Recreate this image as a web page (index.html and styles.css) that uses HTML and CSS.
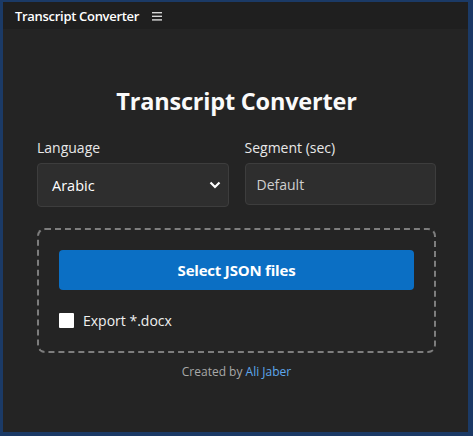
FILE: index.html
```html
<!DOCTYPE html>
<html lang="en">

<head>
    <meta charset="UTF-8">
    <title>Transcript Converter</title>
    <link rel="stylesheet" href="styles.css">
</head>

<body>
    <div class="panel">
        <div class="tabBar">
            <span class="tabTitle">Transcript Converter</span>
            <span class="tabMenu">
                <svg width="10" height="9" viewBox="0 0 10 9">
                    <rect x="0" y="0" width="10" height="1.4" fill="#d8d8d8"></rect>
                    <rect x="0" y="3.6" width="10" height="1.4" fill="#d8d8d8"></rect>
                    <rect x="0" y="7.2" width="10" height="1.4" fill="#d8d8d8"></rect>
                </svg>
            </span>
        </div>

        <div class="content">
            <h1>Transcript Converter</h1>

            <div class="fields">
                <div class="field">
                    <label for="language">Language</label>
                    <div class="selectBox">
                        <span>Arabic</span>
                        <svg width="12" height="8" viewBox="0 0 12 8">
                            <path d="M1.5 1.5 L6 6 L10.5 1.5" fill="none" stroke="#fff" stroke-width="2.2"></path>
                        </svg>
                    </div>
                </div>
                <div class="field">
                    <label for="segment">Segment (sec)</label>
                    <input id="segment" type="text" placeholder="Default">
                </div>
            </div>

            <div class="dropZone">
                <button class="selectBtn">Select JSON files</button>
                <label class="exportRow">
                    <span class="checkbox"></span>
                    Export *.docx
                </label>
            </div>

            <p class="credit">Created by <a href="#">Ali Jaber</a></p>
        </div>
    </div>
</body>

</html>
```

FILE: styles.css
```css
html,
body {
    height: 100%;
}

body {
    margin: 0;
    background-color: #1b3a66;
    font-family: "Open Sans", "Noto Sans", sans-serif;
    color: #e8e8e8;
    padding: 2px 5px 4px 3px;
    box-sizing: border-box;
}

.panel {
    height: 100%;
    background-color: #242424;
    display: flex;
    flex-direction: column;
}

.tabBar {
    height: 27px;
    background-color: #1f1f1f;
    display: flex;
    align-items: center;
    padding-left: 12px;
    gap: 13px;
}

.tabTitle {
    font-size: 13px;
    font-weight: 600;
    color: #fff;
    letter-spacing: -0.3px;
}

.tabMenu {
    display: flex;
    padding-top: 1px;
}

.content {
    padding: 0 32px 0 34px;
}

h1 {
    margin: 57px 0 0 0;
    font-size: 23.5px;
    font-weight: 700;
    text-align: center;
    color: #fafafa;
    letter-spacing: -0.2px;
    line-height: 30px;
}

.fields {
    display: flex;
    gap: 16px;
    margin-top: 22px;
}

.field {
    flex: 1 1 0;
    min-width: 0;
    display: flex;
    flex-direction: column;
}

.field label {
    font-size: 14px;
    color: #e8e8e8;
    line-height: 20px;
    margin-bottom: 5px;
}

.selectBox {
    height: 44px;
    box-sizing: border-box;
    background-color: #2e2e2e;
    border: 1px solid #3d3d3d;
    border-radius: 4px;
    display: flex;
    align-items: center;
    justify-content: space-between;
    padding: 0 7px 0 14px;
    font-size: 14.5px;
    color: #fff;
}

.field input {
    width: 100%;
    min-width: 0;
    height: 42px;
    box-sizing: border-box;
    background-color: #2e2e2e;
    border: 1px solid #3d3d3d;
    border-radius: 4px;
    padding: 0 11px;
    font-family: inherit;
    font-size: 14px;
    color: #ddd;
    outline: none;
}

.field input::placeholder {
    color: #cfcfcf;
}

.dropZone {
    margin-top: 21px;
    border: 2px dashed #7d7d7d;
    border-radius: 8px;
    padding: 20px 20px 20px 20px;
    display: flex;
    flex-direction: column;
    gap: 19px;
}

.selectBtn {
    height: 40px;
    border: none;
    border-radius: 4px;
    background-color: #0b6fc4;
    color: #fff;
    font-family: inherit;
    font-size: 15px;
    font-weight: 700;
    letter-spacing: -0.2px;
}

.exportRow {
    display: flex;
    align-items: center;
    gap: 9px;
    font-size: 14px;
    color: #f0f0f0;
    height: 22px;
}

.checkbox {
    width: 15px;
    height: 15px;
    background-color: #fff;
    border-radius: 1px;
}

.credit {
    margin: 10px 0 0 0;
    text-align: center;
    font-size: 12px;
    color: #a8a8a8;
}

.credit a {
    color: #5ea7ec;
    text-decoration: none;
}
```
